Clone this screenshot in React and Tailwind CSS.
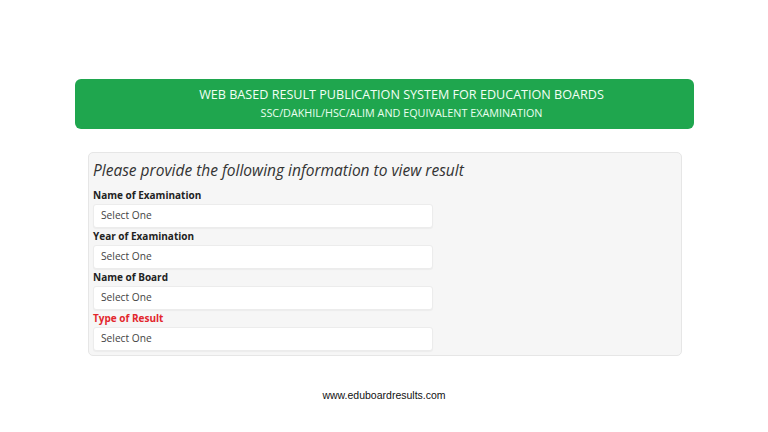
import React from 'react';

const fields = [
  { label: 'Name of Examination' },
  { label: 'Year of Examination' },
  { label: 'Name of Board' },
  { label: 'Type of Result', red: true },
];

const SelectBox = () => (
  <div className="w-[340px] h-[24px] bg-white rounded-[3px] border border-[#ececec] shadow-[0_1px_1px_rgba(0,0,0,0.04)] flex items-center pl-[7px] text-[10.2px] text-[#444]">
    Select One
  </div>
);

export default function App() {
  return (
    <div className="w-[768px] h-[432px] bg-white overflow-hidden" style={{ fontFamily: '"Open Sans", "Noto Sans", sans-serif' }}>
      <div className="pt-[79px] px-[75px] w-[769px]">
        <div className="h-[50px] bg-[#1fa64e] rounded-[6px] flex flex-col items-center justify-center text-white pl-[34px] pb-[3px]">
          <div className="text-[12.6px] leading-[18px] text-[#f2fff5]">WEB BASED RESULT PUBLICATION SYSTEM FOR EDUCATION BOARDS</div>
          <div className="text-[10.8px] leading-[14px] mt-[2px] text-[#eafff0]">SSC/DAKHIL/HSC/ALIM AND EQUIVALENT EXAMINATION</div>
        </div>
      </div>

      <div className="mt-[23px] ml-[88px] w-[594px] h-[204px] bg-[#f6f6f6] border border-[#e6e6e6] rounded-[5px] pl-[4px] pt-[6px]">
        <div className="text-[15.5px] leading-[22px] italic text-[#333] mb-[6px]">
          Please provide the following information to view result
        </div>
        <div className="flex flex-col">
          {fields.map((f) => (
            <div key={f.label} className="flex flex-col">
              <div className={`text-[10px] font-bold leading-[17px] h-[17px] ${f.red ? 'text-[#e3262d]' : 'text-[#222]'}`}>
                {f.label}
              </div>
              <SelectBox />
            </div>
          ))}
        </div>
      </div>

      <div className="mt-[32px] text-center text-[10.5px] text-[#111]" style={{ fontFamily: '"Liberation Sans", Arial, sans-serif' }}>
        www.eduboardresults.com
      </div>
    </div>
  );
}
